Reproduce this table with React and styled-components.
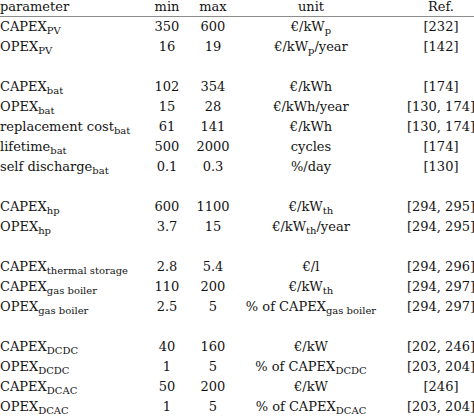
import React from 'react'
import styled, { createGlobalStyle } from 'styled-components'

const GlobalStyle = createGlobalStyle`
body {
  margin: 0;
  background: #ffffff;
}
`

const Sheet = styled.div`
width: 474px;
height: 416px;
overflow: hidden;
background: #ffffff;
color: #141414;
font-family: "DejaVu Serif", "Liberation Serif", serif;
font-size: 13px;
`

const Row = styled.div`
display: grid;
grid-template-columns: 145px 44px 48px 148px 112px;
height: ${({ $head }) => ($head ? '14px' : '20px')};
line-height: ${({ $head }) => ($head ? '14px' : '20px')};
padding-bottom: ${({ $head }) => ($head ? '2px' : '0')};
border-bottom: ${({ $head }) => ($head ? '1px solid #8c8c8c' : 'none')};
white-space: nowrap;
`

const Cell = styled.div`
text-align: ${({ $left }) => ($left ? 'left' : 'center')};
`

const Sub = styled.sub`
font-size: 10px;
line-height: 0;
vertical-align: -2.5px;
`

const Gap = styled.div`
height: 20px;
`

const X = ({ base, sub }) => (
  <>
    {base}
    <Sub>{sub}</Sub>
  </>
)

const rows = [
  [<X base="CAPEX" sub="PV" />, '350', '600', <X base="€/kW" sub="p" />, '[232]'],
  [<X base="OPEX" sub="PV" />, '16', '19', <>€/kW<Sub>p</Sub>/year</>, '[142]'],
  null,
  [<X base="CAPEX" sub="bat" />, '102', '354', '€/kWh', '[174]'],
  [<X base="OPEX" sub="bat" />, '15', '28', '€/kWh/year', '[130, 174]'],
  [<X base="replacement cost" sub="bat" />, '61', '141', '€/kWh', '[130, 174]'],
  [<X base="lifetime" sub="bat" />, '500', '2000', 'cycles', '[174]'],
  [<X base="self discharge" sub="bat" />, '0.1', '0.3', '%/day', '[130]'],
  null,
  [<X base="CAPEX" sub="hp" />, '600', '1100', <X base="€/kW" sub="th" />, '[294, 295]'],
  [<X base="OPEX" sub="hp" />, '3.7', '15', <>€/kW<Sub>th</Sub>/year</>, '[294, 295]'],
  null,
  [<X base="CAPEX" sub="thermal storage" />, '2.8', '5.4', '€/l', '[294, 296]'],
  [<X base="CAPEX" sub="gas boiler" />, '110', '200', <X base="€/kW" sub="th" />, '[294, 297]'],
  [<X base="OPEX" sub="gas boiler" />, '2.5', '5', <X base="% of CAPEX" sub="gas boiler" />, '[294, 297]'],
  null,
  [<X base="CAPEX" sub="DCDC" />, '40', '160', '€/kW', '[202, 246]'],
  [<X base="OPEX" sub="DCDC" />, '1', '5', <X base="% of CAPEX" sub="DCDC" />, '[203, 204]'],
  [<X base="CAPEX" sub="DCAC" />, '50', '200', '€/kW', '[246]'],
  [<X base="OPEX" sub="DCAC" />, '1', '5', <X base="% of CAPEX" sub="DCAC" />, '[203, 204]'],
]

export default function App() {
  return (
    <>
      <GlobalStyle />
      <Sheet>
        <Row $head>
          <Cell $left>parameter</Cell>
          <Cell>min</Cell>
          <Cell>max</Cell>
          <Cell>unit</Cell>
          <Cell>Ref.</Cell>
        </Row>
        {rows.map((r, i) =>
          r ? (
            <Row key={i}>
              {r.map((c, j) => (
                <Cell key={j} $left={j === 0}>{c}</Cell>
              ))}
            </Row>
          ) : (
            <Gap key={i} />
          )
        )}
      </Sheet>
    </>
  )
}
